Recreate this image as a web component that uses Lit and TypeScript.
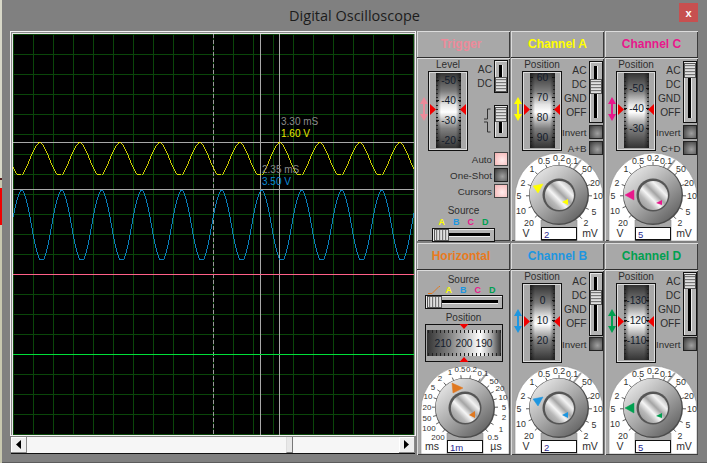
import { LitElement, html, css, svg } from "lit";
import { customElement } from "lit/decorators.js";

const CH_LABELS: [string, number, number][] = [
  ["20", 19, 193], ["10", 11, 181], ["5", 9, 166], ["2", 13, 153], ["1", 22, 139], ["0.5", 34, 131], ["0.2", 49, 128],
  ["0.1", 62, 131], ["50", 77, 139], ["20", 85, 153], ["10", 88, 166], ["5", 84, 182], ["2", 76, 193],
];
const H_LABELS: [string, number, number][] = [
  ["200", 22, 194], ["100", 13, 185], ["50", 11, 175], ["20", 11, 164], ["10", 12, 153], ["5", 17, 144], ["2", 24, 135],
  ["1", 34, 129], ["0.5", 44, 126], ["0.2", 55.5, 126], ["0.1", 67, 130], ["50", 78, 138], ["20", 84, 145], ["10", 87, 154],
  ["5", 88, 164], ["2", 88, 174], ["1", 85, 186], ["0.5", 77, 194],
];

const wave = (mid: number, amp: number, peak: number) => {
  const pts: string[] = [];
  for (let x = 13; x <= 414; x++) {
    const y = mid - amp * Math.cos((2 * Math.PI * (x - peak)) / 40);
    pts.push(`${x},${Math.round(y) + 0.5}`);
  }
  return pts.join(" ");
};

const range = (from: number, to: number, step: number) => {
  const r: number[] = [];
  for (let v = from; v <= to; v += step) r.push(v);
  return r;
};

@customElement("app-root")
export class AppRoot extends LitElement {
  static styles = css`
    :host { display: block; width: 707px; height: 463px; overflow: hidden; background: #808080;
      font-family: "Liberation Sans", Arial, sans-serif; }
    .defs { position: absolute; width: 0; height: 0; }
    .app { display: flex; width: 707px; height: 463px; }
    .strip { width: 2px; flex: none; background: linear-gradient(#d8d8c8 0 178px, #5a2020 178px 180px, #c8c8b0 180px 188px, #f00000 188px 225px, #c8c8b0 225px); }
    .win { flex: 1; display: flex; flex-direction: column; border-bottom: 1px solid #5c5c5c; box-sizing: border-box; }
    .title { height: 31px; flex: none; display: grid; grid-template-columns: 1fr auto 1fr; align-items: center; }
    .title-text { grid-column: 2; font: 14.5px "Open Sans", sans-serif; color: #1c1c1c; margin-top: -1px; }
    .close { grid-column: 3; justify-self: end; margin: -6px 9px 0 0; width: 19px; height: 19px; background: #c75050; color: #fff;
      font: bold 11px "Liberation Sans", sans-serif; display: flex; align-items: center; justify-content: center; }
    .main { display: flex; padding-left: 8px; }
    .scope { width: 406px; flex: none; margin-right: 1px; }
    .frame { box-sizing: border-box; width: 406px; height: 405px; padding: 2px 1px 0 2px; background: #909090;
      border: 1px solid #f2f2f2; box-shadow: inset 1px 1px 0 #8a8a8a, inset 2px 2px 0 #e8e8e8; }
    .screen { display: block; width: 401px; height: 401px; background: #000; }
    .gl { stroke: #0a460a; stroke-width: 1; }
    .cur { stroke: #a8a8a8; stroke-width: 1; }
    .st { font: 10px "Liberation Sans", sans-serif; }
    .scroll { margin: 1px 0 0 1px; width: 404px; height: 17px; display: flex; background: #f6f6f6; border-bottom: 1px solid #111; box-sizing: border-box; position: relative; }
    .sbtn { width: 16px; flex: none; background: #efefef; border-right: 1px solid #8a8a8a; border-bottom: 1px solid #8a8a8a; box-sizing: border-box;
      box-shadow: inset 1px 1px 0 #fff; display: flex; align-items: center; justify-content: center; }
    .strack { flex: 1; display: flex; padding-left: 259px; }
    .thumb { width: 7px; background: #e8e8e8; border-right: 1px solid #777; border-bottom: 1px solid #777; border-left: 1px solid #ddd; box-sizing: border-box; }
    .panels { display: grid; grid-template-columns: repeat(3, 93px); grid-template-rows: 210px 212px; column-gap: 1px; row-gap: 2px; }
    .panel { background: #a8a8a8; display: flex; flex-direction: column; box-shadow: inset 1px 1px 0 #dcdcdc, inset -1px -1px 0 #3c3c3c; }
    .hd { height: 27px; flex: none; box-sizing: border-box; border-bottom: 1px solid #2e2e2e; font: bold 12px "Liberation Sans", sans-serif;
      display: flex; align-items: center; justify-content: center; }
    .trig .hd, .hor .hd { padding-right: 5px; }
    .bd { flex: 1; display: flex; flex-direction: column; padding-top: 1px; box-shadow: inset 1px 1px 0 #dcdcdc; min-height: 0; }
    .top { display: flex; flex: none; }
    .r0 .top { height: 93px; }
    .r1 .top { height: 94px; }
    .arrow { width: 8px; height: 24px; flex: none; margin: 38px 0 0 3px; display: block; }
    .col { width: 40px; flex: none; display: flex; flex-direction: column; }
    .lb { font-size: 10px; line-height: 12px; height: 12px; color: #2e2e2e; text-align: center; white-space: nowrap; }
    .drum { width: 40px; height: 80px; display: block; flex: none; }
    .right { flex: 1; display: flex; flex-direction: column; align-items: flex-end; padding: 2px 2px 0 0; position: relative; z-index: 1; }
    .r1 .right { padding-top: 1px; }
    .swrow { display: flex; gap: 2px; align-items: flex-start; }
    .swl { display: flex; flex-direction: column; padding-top: 3px; font-size: 10.2px; line-height: 14px; color: #2e2e2e; text-align: right; }
    .sw { position: relative; width: 14px; box-sizing: border-box; border: 1px solid #111; background: #b4b4b4; flex: none;
      box-shadow: inset 1px 1px 0 #e8e8e8; }
    .sw .track { position: absolute; left: 4px; top: 4px; bottom: 4px; width: 3px; background: #000; border-right: 1px solid #eee; }
    .handle { position: absolute; left: 0; width: 12px; height: 15px; box-sizing: border-box; border: 1px solid #555;
      background: repeating-linear-gradient(#e0e0e0 0 1px, #777 1px 2px, #ccc 2px 3px); }
    .brow { display: flex; gap: 2px; align-items: center; margin-top: 2px; font-size: 9.8px; color: #2e2e2e; white-space: nowrap; }
    .r1 .brow { margin-top: 1px; }
    .btn { width: 14px; height: 14px; flex: none; box-sizing: border-box; border: 1px solid #222; display: block;
      background: radial-gradient(circle at 62% 62%, #a0a0a0, #383838); }
    .btn.pink { background: radial-gradient(circle at 60% 60%, #ffecec, #f4b0b0); border-color: #444; }
    .knob { display: block; width: 93px; height: 89px; flex: none; }
    .kt { font: 8.8px "Liberation Sans", sans-serif; fill: #333; text-anchor: middle; dominant-baseline: central; }
    .ks { font-size: 8px; }
    .ku { font: 10.5px "Liberation Sans", sans-serif; fill: #2e2e2e; text-anchor: middle; dominant-baseline: central; }
    .kv { font: 9.5px "Liberation Sans", sans-serif; fill: #2a2a90; dominant-baseline: central; }
    .dt { font: 10.2px "Liberation Sans", sans-serif; fill: #141c2c; text-anchor: middle; dominant-baseline: central; }
    .tr-right { padding-top: 1px; }
    .brk { width: 8px; height: 26px; display: block; flex: none; margin-top: 3px; }
    .sw2 { margin-top: 12px; display: flex; gap: 3px; }
    .tbtns { display: flex; flex-direction: column; align-items: flex-end; padding-right: 2px; flex: none; }
    .tbtns .brow { margin: 0 0 2px; height: 14px; }
    .src { margin-top: 5px; }
    .abcd { display: flex; justify-content: center; font: bold 9px "Liberation Sans", sans-serif; height: 10px; line-height: 10px; align-items: center; }
    .abcd span { width: 14.5px; text-align: center; }
    .abcd svg { width: 12px; height: 8px; display: block; margin-right: 2px; }
    .hsw { position: relative; box-sizing: border-box; border: 1px solid #111; background: #b4b4b4; box-shadow: inset 1px 1px 0 #e8e8e8; height: 14px; margin: 1px auto 0; flex: none; }
    .hsw .track { position: absolute; top: 4px; left: 4px; right: 4px; height: 3px; background: #000; border-bottom: 1px solid #eee; }
    .hsw .handle { top: 0; left: 1px; width: 15px; height: 12px; background: repeating-linear-gradient(90deg, #e0e0e0 0 1px, #777 1px 2px, #ccc 2px 3px); }
    .trg { width: 63px; }
    .hz { width: 78px; }
    .hor .bd { padding-top: 5px; }
    .hor .lb.first { height: 10px; line-height: 10px; }
    .hor .hsw { margin-top: 0; }
    .hor .pl { margin-top: 3px; }
    .hdrum { width: 78px; height: 38px; display: block; margin: 0 auto 3px; flex: none; }
  `;

  drum(labels: [string, number][]) {
    const ticks = range(2, 77, 4);
    return html`<svg class="drum" viewBox="0 0 40 80">
      <rect x="0.5" y="0.5" width="39" height="79" fill="#a8a8a8" stroke="#111"></rect>
      <rect x="1.5" y="1.5" width="37" height="77" fill="none" stroke="#dcdcdc"></rect>
      <rect x="8" y="2" width="25" height="75" fill="url(#dv)"></rect>
      <rect x="8" y="2" width="25" height="75" fill="url(#dh)"></rect>
      ${ticks.map((y) => svg`<path d="M8 ${y + 0.5}h2M31 ${y + 0.5}h2" stroke="#222" stroke-width="1"></path>`)}
      ${labels.map(([t, y]) => svg`<path d="M8 ${y + 0.5}h3M30 ${y + 0.5}h3" stroke="#111"></path><text class="dt" x="20.5" y=${y}>${t}</text>`)}
      <path d="M2 33l6 5.5-6 5.5zM38 33l-6 5.5 6 5.5z" fill="#f00000"></path>
    </svg>`;
  }

  knob(opts: { labels: [string, number, number][]; left: string; right: string; value: string; color: string;
    outer: string; inner: string; small?: boolean }) {
    const cx = 49, cy = 165;
    return html`<svg class="knob" viewBox="1 122 93 89">
      <path d="M5 211V167A44 44 0 0 1 93 167V211H67V190H31V211Z" fill="#fff" stroke="#8a8a8a" stroke-width="0.6"></path>
      <path d="M63 140L71 130" stroke="#a0a0a0" stroke-width="2"></path>
      ${opts.labels.map(([t, x, y]) => {
        const a = Math.atan2(y - cy, x - cx);
        const c = Math.cos(a), s = Math.sin(a);
        return svg`<path d="M${cx + 29 * c} ${cy + 29 * s}L${cx + 33 * c} ${cy + 33 * s}" stroke="#333" stroke-width="0.8"></path>
          <text class=${opts.small ? "kt ks" : "kt"} x=${x} y=${y}>${t}</text>`;
      })}
      <circle cx=${cx} cy=${cy} r="30" fill="#4c4c4c"></circle>
      <circle cx=${cx - 0.4} cy=${cy - 0.4} r="29" fill="url(#ko)"></circle>
      <circle cx=${cx} cy=${cy} r="16.5" fill="#555"></circle>
      <circle cx=${cx + 0.4} cy=${cy + 0.4} r="14.5" fill="url(#ki)"></circle>
      <polygon points=${opts.outer} fill=${opts.color} stroke=${opts.color} stroke-width="0.5"></polygon>
      <polygon points=${opts.inner} fill=${opts.color}></polygon>
      <text class="ku" x="16" y="203">${opts.left}</text>
      <text class="ku" x="80" y="203">${opts.right}</text>
      <rect x="31.5" y="197.5" width="35" height="12" fill="#fff" stroke="#111"></rect>
      <text class="kv" x="34" y="204">${opts.value}</text>
    </svg>`;
  }

  sw(h: number, top: number) {
    return html`<div class="sw" style="height:${h}px"><span class="track"></span><span class="handle" style="top:${top}px"></span></div>`;
  }

  arrow(color: string) {
    return html`<svg class="arrow" viewBox="0 0 8 24"><path d="M4 0L8 7H5V17H8L4 24L0 17H3V7H0Z" fill=${color}></path></svg>`;
  }

  channel(o: { name: string; color: string; drum: [string, number][]; top: number; aplus?: string; row: number; outer: string; inner: string; value: string }) {
    return html`<section class="panel r${o.row}">
      <div class="hd" style="color:${o.color}">${o.name}</div>
      <div class="bd">
        <div class="top">
          ${this.arrow(o.color)}
          <div class="col"><div class="lb">Position</div>${this.drum(o.drum)}</div>
          <div class="right">
            <div class="swrow">
              <div class="swl"><span>AC</span><span>DC</span><span>GND</span><span>OFF</span></div>
              ${this.sw(o.row ? 64 : 62, o.top)}
            </div>
            <div class="brow">Invert<span class="btn"></span></div>
            ${o.aplus ? html`<div class="brow">${o.aplus}<span class="btn"></span></div>` : ""}
          </div>
        </div>
        ${this.knob({ labels: CH_LABELS, left: "V", right: "mV", value: o.value, color: o.color, outer: o.outer, inner: o.inner })}
      </div>
    </section>`;
  }

  source(ramp: boolean) {
    return html`<div class="abcd">
      ${ramp ? html`<svg viewBox="0 0 12 8"><path d="M0 7.5H4L11 .5H12" fill="none" stroke="#e07820"></path></svg>` : ""}
      <span style="color:#ffff00">A</span><span style="color:#1e96e0">B</span><span style="color:#e8188c">C</span><span style="color:#00a050">D</span>
    </div>`;
  }

  render() {
    const vs = range(33, 413, 20);
    const hs = range(34, 434, 20);
    const outerC = "21,165 30,160 30,170";
    const innerC = "52,173 58,170 58,175";
    const outerA = "23,156 33,154 28,163";
    const innerA = "52,172 58,169 58,175";
    return html`
      <svg class="defs" aria-hidden="true">
        <defs>
          <linearGradient id="dv" x1="0" y1="0" x2="0" y2="1">
            <stop offset="0" stop-color="#343434"></stop><stop offset="0.24" stop-color="#7c7c7c"></stop>
            <stop offset="0.42" stop-color="#e4e4e4"></stop><stop offset="0.52" stop-color="#ffffff"></stop>
            <stop offset="0.74" stop-color="#808080"></stop><stop offset="1" stop-color="#343434"></stop>
          </linearGradient>
          <linearGradient id="dh" x1="0" y1="0" x2="1" y2="0">
            <stop offset="0" stop-color="#000" stop-opacity="0.5"></stop><stop offset="0.2" stop-color="#000" stop-opacity="0"></stop>
            <stop offset="0.8" stop-color="#000" stop-opacity="0"></stop><stop offset="1" stop-color="#000" stop-opacity="0.5"></stop>
          </linearGradient>
          <linearGradient id="dx" x1="0" y1="0" x2="1" y2="0">
            <stop offset="0" stop-color="#343434"></stop><stop offset="0.3" stop-color="#808080"></stop>
            <stop offset="0.72" stop-color="#ffffff"></stop><stop offset="0.88" stop-color="#a0a0a0"></stop><stop offset="1" stop-color="#343434"></stop>
          </linearGradient>
          <linearGradient id="ko" x1="0.15" y1="0.1" x2="0.85" y2="0.9">
            <stop offset="0" stop-color="#e4e4e4"></stop><stop offset="0.5" stop-color="#a8a8a8"></stop><stop offset="1" stop-color="#666"></stop>
          </linearGradient>
          <linearGradient id="ki" x1="0" y1="1" x2="1" y2="0">
            <stop offset="0" stop-color="#888"></stop><stop offset="0.28" stop-color="#b8b8b8"></stop><stop offset="0.42" stop-color="#f6f6f6"></stop>
            <stop offset="0.56" stop-color="#a4a4a4"></stop><stop offset="0.72" stop-color="#f2f2f2"></stop><stop offset="1" stop-color="#8a8a8a"></stop>
          </linearGradient>
        </defs>
      </svg>
      <div class="app">
        <div class="strip"></div>
        <div class="win">
          <header class="title"><span class="title-text">Digital Oscilloscope</span><span class="close">x</span></header>
          <div class="main">
            <div class="scope">
              <div class="frame">
                <svg class="screen" viewBox="13 34 401 401" shape-rendering="crispEdges">
                  <path class="gl" d=${"M13.5 34V435 " + vs.map((x) => `M${x + 0.5} 34V435`).join(" ")} fill="none"></path>
                  <path class="gl" d=${hs.map((y) => `M13 ${y + 0.5}H414`).join(" ")} fill="none"></path>
                  <path d="M213.5 34V435" stroke="#9a9a9a" stroke-dasharray="4 2" fill="none"></path>
                  <path class="cur" d="M260.5 34V435M279.5 34V435M13 142.5H414M13 189.5H414" fill="none"></path>
                  <path d="M13 274.5H414" stroke="#ff6088" fill="none"></path>
                  <path d="M13 354.5H414" stroke="#00e038" fill="none"></path>
                  <polyline points=${wave(158, 16, 39.5)} fill="none" stroke="#ffff00" stroke-width="0.8"></polyline>
                  <polyline points=${wave(224.5, 35, 21.5)} fill="none" stroke="#0c9ce4" stroke-width="0.8"></polyline>
                  <text class="st" x="281" y="125" fill="#8a8a8a">3.30 mS</text>
                  <text class="st" x="281" y="137" fill="#e8e800">1.60 V</text>
                  <text class="st" x="262" y="173" fill="#8a8a8a">2.35 mS</text>
                  <text class="st" x="262" y="185" fill="#0c8cd8">3.50 V</text>
                </svg>
              </div>
              <div class="scroll">
                <div class="sbtn"><svg width="5" height="9" viewBox="0 0 5 9"><path d="M5 0V9L0 4.500Z" fill="#000"></path></svg></div>
                <div class="strack"><div class="thumb"></div></div>
                <div class="sbtn"><svg width="5" height="9" viewBox="0 0 5 9"><path d="M0 0V9L5 4.500Z" fill="#000"></path></svg></div>
              </div>
            </div>
            <div class="panels">
              <section class="panel r0 trig">
                <div class="hd" style="color:#ec8a9a">Trigger</div>
                <div class="bd">
                  <div class="top">
                    ${this.arrow("#ec8a9a")}
                    <div class="col"><div class="lb">Level</div>${this.drum([["-50", 9], ["-40", 29], ["-30", 49], ["-20", 69]])}</div>
                    <div class="right tr-right">
                      <div class="swrow"><div class="swl"><span>AC</span><span>DC</span></div>${this.sw(33, 16)}</div>
                      <div class="sw2">
                        <svg class="brk" viewBox="0 0 8 26"><path d="M7.500 1H4.500V11H1M1 14H4.500V24H7.500" fill="none" stroke="#333"></path></svg>
                        ${this.sw(33, 1)}
                      </div>
                    </div>
                  </div>
                  <div class="tbtns">
                    <div class="brow">Auto<span class="btn pink"></span></div>
                    <div class="brow">One-Shot<span class="btn"></span></div>
                    <div class="brow">Cursors<span class="btn pink"></span></div>
                  </div>
                  <div class="lb src">Source</div>
                  ${this.source(false)}
                  <div class="hsw trg"><span class="track"></span><span class="handle"></span></div>
                </div>
              </section>
              ${this.channel({ name: "Channel A", color: "#ffff00", row: 0, top: 17, aplus: "A+B", value: "2", outer: outerA, inner: innerA,
                drum: [["60", 6], ["70", 26], ["80", 46], ["90", 66]] })}
              ${this.channel({ name: "Channel C", color: "#e8188c", row: 0, top: 1, aplus: "C+D", value: "5", outer: outerC, inner: innerC,
                drum: [["-50", 17], ["-40", 37], ["-30", 57]] })}
              <section class="panel r1 hor">
                <div class="hd" style="color:#e87a20">Horizontal</div>
                <div class="bd">
                  <div class="lb first">Source</div>
                  ${this.source(true)}
                  <div class="hsw hz"><span class="track"></span><span class="handle"></span></div>
                  <div class="lb pl">Position</div>
                  <svg class="hdrum" viewBox="0 0 78 38">
                    <rect x="0.5" y="0.5" width="77" height="37" fill="#a8a8a8" stroke="#111"></rect>
                    <rect x="2" y="6" width="74" height="26" fill="url(#dx)"></rect>
                    ${range(3, 75, 4).map((x) => svg`<path d="M${x + 0.5} 6v3M${x + 0.5} 29v3" stroke="#222"></path>`)}
                    <text class="dt" x="18" y="19">210</text><text class="dt" x="39" y="19">200</text><text class="dt" x="59" y="19">190</text>
                    <path d="M34.500 0h9l-4.500 5zM34.500 38h9l-4.500-5z" fill="#f00000"></path>
                  </svg>
                  ${this.knob({ labels: H_LABELS, left: "ms", right: "µs", value: "1m", color: "#e07820", outer: "36,140 37,150 47,145", inner: "53,172 59,168 59,175", small: true })}
                </div>
              </section>
              ${this.channel({ name: "Channel B", color: "#1e96e0", row: 1, top: 17, value: "2", outer: outerA, inner: innerA,
                drum: [["0", 17], ["10", 37], ["20", 57]] })}
              ${this.channel({ name: "Channel D", color: "#00a050", row: 1, top: 1, value: "5", outer: outerC, inner: innerC,
                drum: [["-130", 17], ["-120", 37], ["-110", 57]] })}
            </div>
          </div>
        </div>
      </div>
    `;
  }
}
